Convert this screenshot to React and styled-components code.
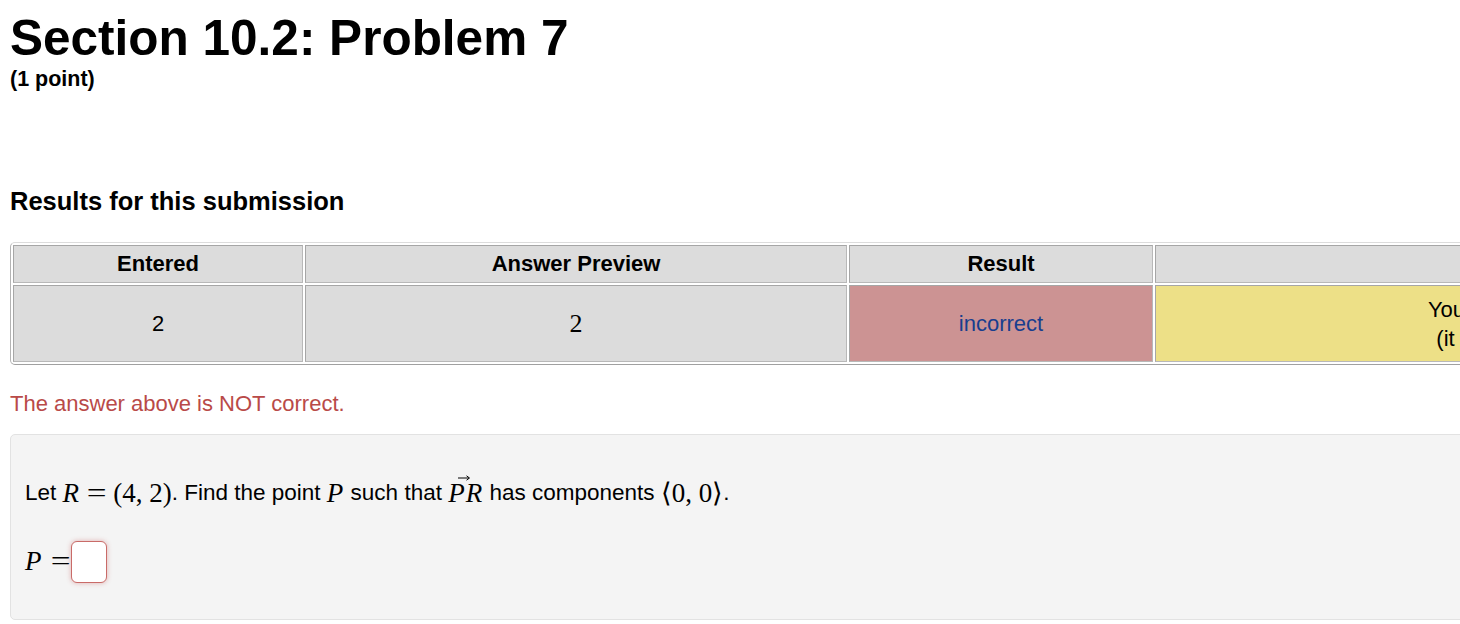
import React from "react";
import styled, { createGlobalStyle } from "styled-components";

const Global = createGlobalStyle`
  html, body { margin: 0; padding: 0; background: #fff; overflow: hidden; }
  body { font-family: "Liberation Sans", Arial, Helvetica, sans-serif; color: #000; }
`;

const Page = styled.div`
  width: 1460px;
  height: 624px;
  overflow: hidden;
  padding-left: 10px;
  box-sizing: border-box;
`;

const Title = styled.h1`
  margin: 10px 0 0;
  font-size: 49.5px;
  line-height: 56px;
  font-weight: 700;
  white-space: nowrap;
`;

const Points = styled.div`
  margin-top: 1px;
  font-size: 21.5px;
  line-height: 24px;
  font-weight: 700;
`;

const SubHeading = styled.h2`
  margin: 95px 0 0;
  font-size: 25.5px;
  line-height: 30px;
  font-weight: 700;
  white-space: nowrap;
`;

const Results = styled.table`
  margin-top: 26px;
  border-collapse: separate;
  border-spacing: 2px;
  table-layout: fixed;
  width: 1932px;
  border: 1px solid;
  border-color: #dcdcdc #a0a0a0 #a0a0a0 #b4b4b4;
  border-radius: 5px;
  font-size: 22px;
`;

const Head = styled.th`
  box-sizing: border-box;
  width: ${(p) => p.$w}px;
  height: 38px;
  padding: 0 4px;
  background: #dcdcdc;
  border: 1px solid;
  border-color: #a6a6a6 #b8b8b8 #b8b8b8 #a6a6a6;
  font-weight: 700;
  line-height: 28px;
  text-align: center;
  vertical-align: middle;
  white-space: nowrap;
`;

const Cell = styled.td`
  box-sizing: border-box;
  height: 77px;
  padding: 0 4px;
  background: ${(p) => p.$bg || "#dcdcdc"};
  color: ${(p) => p.$color || "#000"};
  border: 1px solid;
  border-color: #a6a6a6 #b8b8b8 #b8b8b8 #a6a6a6;
  line-height: 29px;
  text-align: center;
  vertical-align: middle;
  font-family: ${(p) => (p.$math ? '"Liberation Serif", "Times New Roman", serif' : "inherit")};
  font-size: ${(p) => (p.$math ? "26px" : "22px")};
  white-space: nowrap;
`;

const ErrorText = styled.div`
  margin-top: 26px;
  font-size: 22px;
  line-height: 26px;
  color: #b94a48;
  white-space: nowrap;
`;

const ProblemBox = styled.div`
  margin-top: 17px;
  width: 1500px;
  height: 186px;
  box-sizing: border-box;
  padding: 44px 0 0 14px;
  background: #f4f4f4;
  border: 1px solid #e2e2e2;
  border-radius: 5px;
`;

const Line = styled.div`
  display: flex;
  align-items: center;
  height: ${(p) => p.$h || 28}px;
  margin-top: ${(p) => p.$mt || 0}px;
  font-size: 22.5px;
  white-space: pre;
`;

const Math = styled.span`
  font-family: "Liberation Serif", "Times New Roman", serif;
  font-size: 27px;
  white-space: nowrap;
`;

const V = styled.i`
  font-style: italic;
  letter-spacing: 1px;
`;

const Op = styled.span`
  display: inline-block;
  transform: scaleX(1.3);
  margin: 0 ${(p) => p.$r ?? 9}px 0 ${(p) => p.$l ?? 9}px;
`;

const Vec = styled.span`
  position: relative;
  display: inline-block;
`;

const Arrow = styled.svg`
  position: absolute;
  left: 10px;
  top: -3px;
`;

const AnswerInput = styled.input`
  width: 36px;
  height: 42px;
  box-sizing: border-box;
  border: 1px solid #c96b68;
  border-radius: 6px;
  background: #fff;
  box-shadow: 0 0 5px rgba(200, 90, 90, 0.45);
  outline: none;
  padding: 0;
`;

export default function App() {
  return (
    <Page>
      <Global />
      <Title>Section 10.2: Problem 7</Title>
      <Points>(1 point)</Points>
      <SubHeading>Results for this submission</SubHeading>
      <Results>
        <thead>
          <tr>
            <Head $w={290}>Entered</Head>
            <Head $w={542}>Answer Preview</Head>
            <Head $w={304}>Result</Head>
            <Head $w={784}>Message</Head>
          </tr>
        </thead>
        <tbody>
          <tr>
            <Cell>2</Cell>
            <Cell $math>2</Cell>
            <Cell $bg="#cc9393" $color="#183e8e">incorrect</Cell>
            <Cell $bg="#ede087">
              Your answer isn't a point
              <br />
              (it looks like a number)
            </Cell>
          </tr>
        </tbody>
      </Results>
      <ErrorText>The answer above is NOT correct.</ErrorText>
      <ProblemBox>
        <Line>
          {"Let "}
          <Math>
            <V>R</V>
            <Op>=</Op>(4, 2)
          </Math>
          {". Find the point "}
          <Math>
            <V>P</V>
          </Math>
          {" such that "}
          <Math>
            <Vec>
              <V>PR</V>
              <Arrow width="13" height="6" viewBox="0 0 13 6">
                <path d="M0 3 H11 M8.5 0.8 L11.5 3 L8.5 5.2" stroke="#000" strokeWidth="1" fill="none" />
              </Arrow>
            </Vec>
          </Math>
          {" has components "}
          <Math>⟨0, 0⟩</Math>
          {"."}
        </Line>
        <Line $h={43} $mt={33}>
          <Math>
            <V>P</V>
            <Op $l={10} $r={3}>=</Op>
          </Math>
          <AnswerInput type="text" />
        </Line>
      </ProblemBox>
    </Page>
  );
}
